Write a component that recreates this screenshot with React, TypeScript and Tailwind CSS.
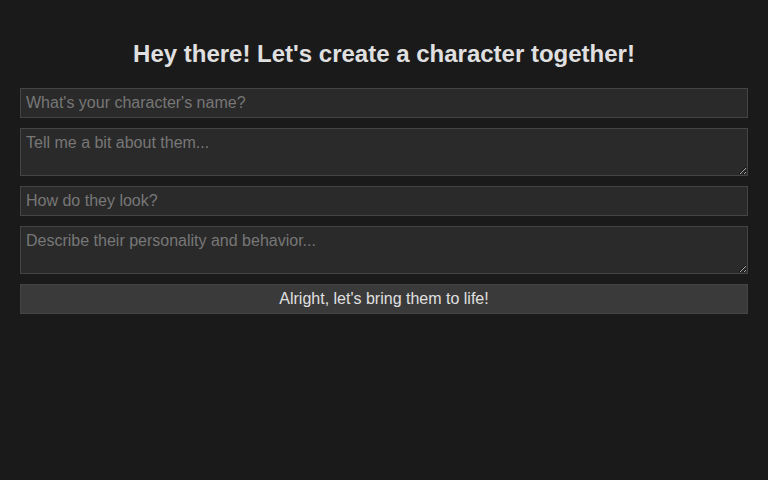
import React from 'react';

const field =
  'block w-full border border-[#444] bg-[#2a2a2a] px-[5px] py-[5px] text-[16px] leading-[18px] text-[#e0e0e0] placeholder:text-[#777] outline-none';

export default function App() {
  return (
    <div className="min-h-[480px] bg-[#1a1a1a] px-5 pt-[40px] font-['Liberation_Sans',Arial,sans-serif] text-[#e0e0e0]">
      <h1 className="mb-5 text-center text-[24px] font-bold leading-[28px]">
        Hey there! Let's create a character together!
      </h1>
      <form className="flex flex-col gap-[10px]" onSubmit={(e) => e.preventDefault()}>
        <input className={`${field} h-[30px]`} placeholder="What's your character's name?" />
        <textarea className={`${field} h-[48px]`} rows={2} placeholder="Tell me a bit about them..." />
        <input className={`${field} h-[30px]`} placeholder="How do they look?" />
        <textarea
          className={`${field} h-[48px]`}
          rows={2}
          placeholder="Describe their personality and behavior..."
        />
        <button
          type="submit"
          className="h-[30px] w-full border border-[#444] bg-[#3a3a3a] text-[16px] text-[#e0e0e0]"
        >
          Alright, let's bring them to life!
        </button>
      </form>
    </div>
  );
}
